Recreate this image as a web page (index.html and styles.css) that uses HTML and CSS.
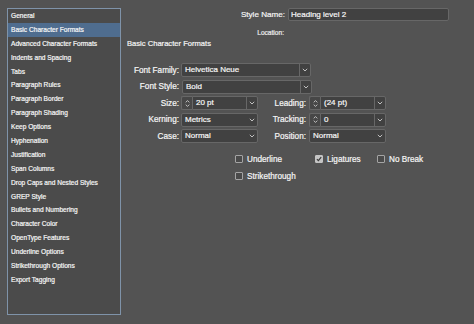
FILE: index.html
```html
<!DOCTYPE html>
<html lang="en">
<head>
  <meta charset="UTF-8" />
  <meta name="viewport" content="width=device-width, initial-scale=1.0" />
  <title>Character Style Options</title>
  <link rel="stylesheet" href="styles.css">
</head>
<body>
  <div class="window">
    <ul class="side-list">
      <li>General</li>
      <li class="selected">Basic Character Formats</li>
      <li>Advanced Character Formats</li>
      <li>Indents and Spacing</li>
      <li>Tabs</li>
      <li>Paragraph Rules</li>
      <li>Paragraph Border</li>
      <li>Paragraph Shading</li>
      <li>Keep Options</li>
      <li>Hyphenation</li>
      <li>Justification</li>
      <li>Span Columns</li>
      <li>Drop Caps and Nested Styles</li>
      <li>GREP Style</li>
      <li>Bullets and Numbering</li>
      <li>Character Color</li>
      <li>OpenType Features</li>
      <li>Underline Options</li>
      <li>Strikethrough Options</li>
      <li>Export Tagging</li>
    </ul>

    <div class="panel">
      <div class="name-row">
        <span class="name-label">Style Name:</span>
        <div class="field name-field">Heading level 2</div>
      </div>
      <div class="location-row">
        <span class="location-label">Location:</span>
      </div>
      <div class="section-title">Basic Character Formats</div>

      <div class="format-grid">
        <span class="lbl">Font Family:</span>
        <div class="combo wide">
          <span class="combo-text">Helvetica Neue</span>
          <span class="combo-arrow"><svg width="6" height="4" viewBox="0 0 6 4"><path d="M0.8 0.8 L3 3 L5.2 0.8" /></svg></span>
        </div>

        <span class="lbl">Font Style:</span>
        <div class="combo wide">
          <span class="combo-text">Bold</span>
          <span class="combo-arrow"><svg width="6" height="4" viewBox="0 0 6 4"><path d="M0.8 0.8 L3 3 L5.2 0.8" /></svg></span>
        </div>

        <span class="lbl">Size:</span>
        <div class="spin-combo">
          <span class="stepper"><svg width="5" height="9" viewBox="0 0 5 9"><path d="M0.7 3.4 L2.5 1.6 L4.3 3.4 M0.7 5.6 L2.5 7.4 L4.3 5.6" /></svg></span>
          <div class="combo">
            <span class="combo-text">20 pt</span>
            <span class="combo-arrow"><svg width="6" height="4" viewBox="0 0 6 4"><path d="M0.8 0.8 L3 3 L5.2 0.8" /></svg></span>
          </div>
        </div>
        <span class="lbl">Leading:</span>
        <div class="spin-combo">
          <span class="stepper"><svg width="5" height="9" viewBox="0 0 5 9"><path d="M0.7 3.4 L2.5 1.6 L4.3 3.4 M0.7 5.6 L2.5 7.4 L4.3 5.6" /></svg></span>
          <div class="combo">
            <span class="combo-text">(24 pt)</span>
            <span class="combo-arrow"><svg width="6" height="4" viewBox="0 0 6 4"><path d="M0.8 0.8 L3 3 L5.2 0.8" /></svg></span>
          </div>
        </div>

        <span class="lbl">Kerning:</span>
        <div class="popup">
          <span class="combo-text">Metrics</span>
          <span class="popup-arrow"><svg width="6" height="4" viewBox="0 0 6 4"><path d="M0.8 0.8 L3 3 L5.2 0.8" /></svg></span>
        </div>
        <span class="lbl">Tracking:</span>
        <div class="spin-combo">
          <span class="stepper"><svg width="5" height="9" viewBox="0 0 5 9"><path d="M0.7 3.4 L2.5 1.6 L4.3 3.4 M0.7 5.6 L2.5 7.4 L4.3 5.6" /></svg></span>
          <div class="combo">
            <span class="combo-text">0</span>
            <span class="combo-arrow"><svg width="6" height="4" viewBox="0 0 6 4"><path d="M0.8 0.8 L3 3 L5.2 0.8" /></svg></span>
          </div>
        </div>

        <span class="lbl">Case:</span>
        <div class="popup">
          <span class="combo-text">Normal</span>
          <span class="popup-arrow"><svg width="6" height="4" viewBox="0 0 6 4"><path d="M0.8 0.8 L3 3 L5.2 0.8" /></svg></span>
        </div>
        <span class="lbl">Position:</span>
        <div class="popup">
          <span class="combo-text">Normal</span>
          <span class="popup-arrow"><svg width="6" height="4" viewBox="0 0 6 4"><path d="M0.8 0.8 L3 3 L5.2 0.8" /></svg></span>
        </div>
      </div>

      <div class="checks">
        <label class="check"><span class="box"></span>Underline</label>
        <label class="check"><span class="box checked"><svg width="6" height="6" viewBox="0 0 6 6"><path d="M0.9 3.1 L2.4 4.6 L5.2 1.2" /></svg></span>Ligatures</label>
        <label class="check"><span class="box"></span>No Break</label>
        <label class="check"><span class="box"></span>Strikethrough</label>
      </div>
    </div>
  </div>
</body>
</html>
```

FILE: styles.css
```css
html, body {
  margin: 0;
  background-color: #535353;
}
body {
  font-family: 'Liberation Sans', Arial, sans-serif;
  color: #f6f6f6;
  -webkit-text-stroke: 0.2px #f6f6f6;
}
.window {
  display: flex;
  padding: 8px 0 0 7px;
}
.side-list {
  list-style: none;
  margin: 0;
  padding: 0;
  width: 112px;
  height: 305px;
  background-color: #4b4b4b;
  border: 1px solid #7f93a9;
}
.side-list li {
  height: 13.9px;
  line-height: 13.9px;
  padding-left: 3px;
  font-size: 6.6px;
  white-space: nowrap;
}
.side-list li.selected {
  background-color: #4f6d8f;
}
.panel {
  margin-left: 6px;
  width: 340px;
}
.name-row {
  display: flex;
  align-items: center;
  height: 13px;
}
.name-label {
  width: 158px;
  text-align: right;
  font-size: 8.1px;
}
.field {
  box-sizing: border-box;
  height: 13px;
  line-height: 11px;
  padding-left: 2px;
  background-color: #414141;
  border: 1px solid #676767;
  border-radius: 2px;
  font-size: 8px;
}
.name-field {
  margin-left: 3px;
  width: 161px;
}
.location-row {
  margin-top: 3px;
  height: 12px;
  line-height: 12px;
}
.location-label {
  display: inline-block;
  width: 157px;
  text-align: right;
  font-size: 6.6px;
  color: #e4e4e4;
}
.section-title {
  margin-top: 3px;
  height: 10px;
  line-height: 10px;
  font-size: 7.6px;
}
.format-grid {
  margin-top: 14px;
  display: grid;
  grid-template-columns: 52px 77px 46px 78px;
  grid-auto-rows: 14px;
  column-gap: 2px;
  row-gap: 2.5px;
  align-items: center;
}
.format-grid > :nth-child(4n) {
  margin-left: 1px;
}
.lbl {
  text-align: right;
  font-size: 8.2px;
  white-space: nowrap;
}
.combo, .popup {
  box-sizing: border-box;
  display: flex;
  height: 14px;
  background-color: #414141;
  border: 1px solid #676767;
  border-radius: 2px;
  font-size: 8px;
}
.combo.wide {
  grid-column: 2 / span 3;
  width: 130px;
}
.combo-text {
  flex: 1;
  line-height: 12px;
  padding-left: 3px;
  white-space: nowrap;
}
.combo-arrow {
  width: 10px;
  border-left: 1px solid #676767;
  display: flex;
  align-items: center;
  justify-content: center;
}
.popup-arrow {
  width: 10px;
  display: flex;
  align-items: center;
  justify-content: center;
}
.combo-arrow svg path,
.popup-arrow svg path,
.stepper svg path {
  fill: none;
  stroke: #cfcfcf;
  stroke-width: 0.9;
}
.spin-combo {
  display: flex;
  height: 14px;
}
.spin-combo .combo {
  flex: 1;
  border-top-left-radius: 0;
  border-bottom-left-radius: 0;
}
.stepper {
  box-sizing: border-box;
  width: 11px;
  height: 14px;
  display: flex;
  align-items: center;
  justify-content: center;
  background-color: #474747;
  border: 1px solid #676767;
  border-right: none;
  border-radius: 2px 0 0 2px;
}
.checks {
  margin-top: 10px;
  padding-left: 108px;
  display: grid;
  grid-template-columns: 80px 62px 80px;
  grid-auto-rows: 12px;
  row-gap: 5px;
}
.check {
  display: flex;
  align-items: center;
  font-size: 8.2px;
  white-space: nowrap;
}
.box {
  box-sizing: border-box;
  width: 8px;
  height: 8px;
  margin-right: 4px;
  border: 1px solid #a4a4a4;
  border-radius: 1px;
  background-color: #4a4a4a;
  display: flex;
  align-items: center;
  justify-content: center;
}
.box.checked {
  background-color: #c4c4c4;
  border-color: #c4c4c4;
}
.box.checked path {
  fill: none;
  stroke: #3a3a3a;
  stroke-width: 1.2;
}
```
